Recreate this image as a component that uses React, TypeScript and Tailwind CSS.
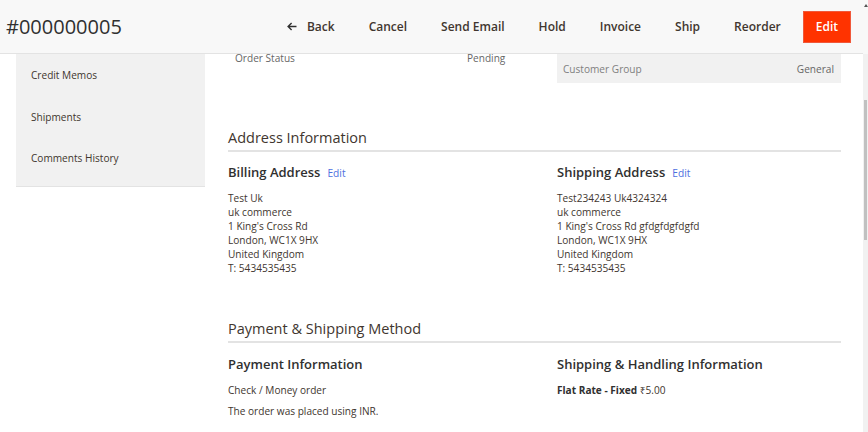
import React from "react";

const font = { fontFamily: '"Open Sans", "Noto Sans", sans-serif' };

function Btn({ children }: { children: React.ReactNode }) {
  return (
    <button className="text-[12px] font-semibold text-[#41362f] px-[17px] h-[32px] flex items-center">
      {children}
    </button>
  );
}

function Addr({ title, lines }: { title: string; lines: string[] }) {
  return (
    <div>
      <div className="flex items-baseline gap-[7px] h-[20px] leading-[20px]">
        <span className="text-[13px] font-semibold text-[#303030]">{title}</span>
        <span className="text-[10.2px] text-[#4d6fe0]">Edit</span>
      </div>
      <div className="mt-[9px] text-[10.1px] leading-[14px] text-[#41362f]">
        {lines.map((l) => (
          <div key={l}>{l}</div>
        ))}
      </div>
    </div>
  );
}

export default function App() {
  return (
    <div style={font} className="w-[868px] h-[432px] overflow-hidden flex bg-white">
      <div className="w-[863px] flex flex-col">
        <header className="h-[54px] shrink-0 bg-[#f8f8f8] border-b border-[#e3e3e3] flex items-center pl-[6px] pr-[12px]">
          <h1 className="text-[20px] text-[#303030] flex-1 leading-none">#000000005</h1>
          <nav className="flex items-center">
            <Btn>
              <svg width="10" height="9" viewBox="0 0 10 9" className="mr-[10px]" fill="none" stroke="#303030" strokeWidth="1.4">
                <path d="M9.5 4.5H1.2M4.6 1L1.1 4.5L4.6 8" />
              </svg>
              Back
            </Btn>
            <Btn>Cancel</Btn>
            <Btn>Send Email</Btn>
            <Btn>Hold</Btn>
            <Btn>Invoice</Btn>
            <Btn>Ship</Btn>
            <Btn>Reorder</Btn>
            <button className="ml-[5px] h-[32px] px-[12px] bg-[#ff3300] border border-[#f0583a] text-white text-[12px] font-semibold">
              Edit
            </button>
          </nav>
        </header>
        <div className="flex-1 overflow-hidden flex pl-[16px] pr-[22px]">
          <aside className="w-[189px] h-[133px] shrink-0 bg-[#f1f1f1] border-b border-[#e3e3e3] flex flex-col pt-[1px] pl-[15px] text-[10.1px] text-[#41362f]">
            <div className="h-[41.5px] flex items-center">Credit Memos</div>
            <div className="h-[41.5px] flex items-center">Shipments</div>
            <div className="h-[41.5px] flex items-center">Comments History</div>
          </aside>
          <main className="flex-1 ml-[23px]">
            <div className="grid grid-cols-[329px_1fr] h-[29px]">
              <div className="flex text-[10.1px] text-[#666] -mt-[3px]">
                <span className="ml-[7px] w-[232px]">Order Status</span>
                <span>Pending</span>
              </div>
              <div className="bg-[#f1f1f1] flex items-center justify-between pl-[6px] pr-[7px] pt-[2px] text-[10.1px] text-[#808080]">
                <span>Customer Group</span>
                <span className="text-[#666]">General</span>
              </div>
            </div>

            <section className="mt-[44px]">
              <h2 className="text-[14.5px] text-[#41362f] leading-[22px] pb-[1px] border-b-2 border-[#e3e3e3]">
                Address Information
              </h2>
              <div className="grid grid-cols-[329px_1fr] mt-[10px]">
                <Addr
                  title="Billing Address"
                  lines={["Test Uk", "uk commerce", "1 King's Cross Rd", "London, WC1X 9HX", "United Kingdom", "T: 5434535435"]}
                />
                <Addr
                  title="Shipping Address"
                  lines={["Test234243 Uk4324324", "uk commerce", "1 King's Cross Rd gfdgfdgfdgfd", "London, WC1X 9HX", "United Kingdom", "T: 5434535435"]}
                />
              </div>
            </section>

            <section className="mt-[43px]">
              <h2 className="text-[14.5px] text-[#41362f] leading-[22px] pb-[1px] border-b-2 border-[#e3e3e3]">
                Payment &amp; Shipping Method
              </h2>
              <div className="grid grid-cols-[329px_1fr] mt-[11px]">
                <div>
                  <div className="text-[13px] font-semibold text-[#303030] h-[20px] leading-[20px]">Payment Information</div>
                  <div className="mt-[9px] text-[10.1px] text-[#41362f] leading-[14px]">Check / Money order</div>
                  <div className="mt-[7px] text-[10.1px] text-[#41362f] leading-[14px]">The order was placed using INR.</div>
                </div>
                <div>
                  <div className="text-[13px] font-semibold text-[#303030] h-[20px] leading-[20px]">Shipping &amp; Handling Information</div>
                  <div className="mt-[9px] text-[10.1px] text-[#41362f] leading-[14px]">
                    <span className="font-bold text-[#303030]">Flat Rate - Fixed</span> ₹5.00
                  </div>
                </div>
              </div>
            </section>
          </main>
        </div>
      </div>
      <div className="w-[5px] flex flex-col">
        <div className="h-[54px] bg-[#f8f8f8] pt-[4px] pl-[1px]">
          <svg width="4" height="3" viewBox="0 0 4 3">
            <path d="M2 0L4 3H0Z" fill="#555" />
          </svg>
        </div>
        <div className="flex-1 bg-[#f1f1f1] pt-[46px] pl-[1px]">
          <div className="w-[3px] h-[140px] bg-[#c1c1c1]" />
        </div>
      </div>
    </div>
  );
}
